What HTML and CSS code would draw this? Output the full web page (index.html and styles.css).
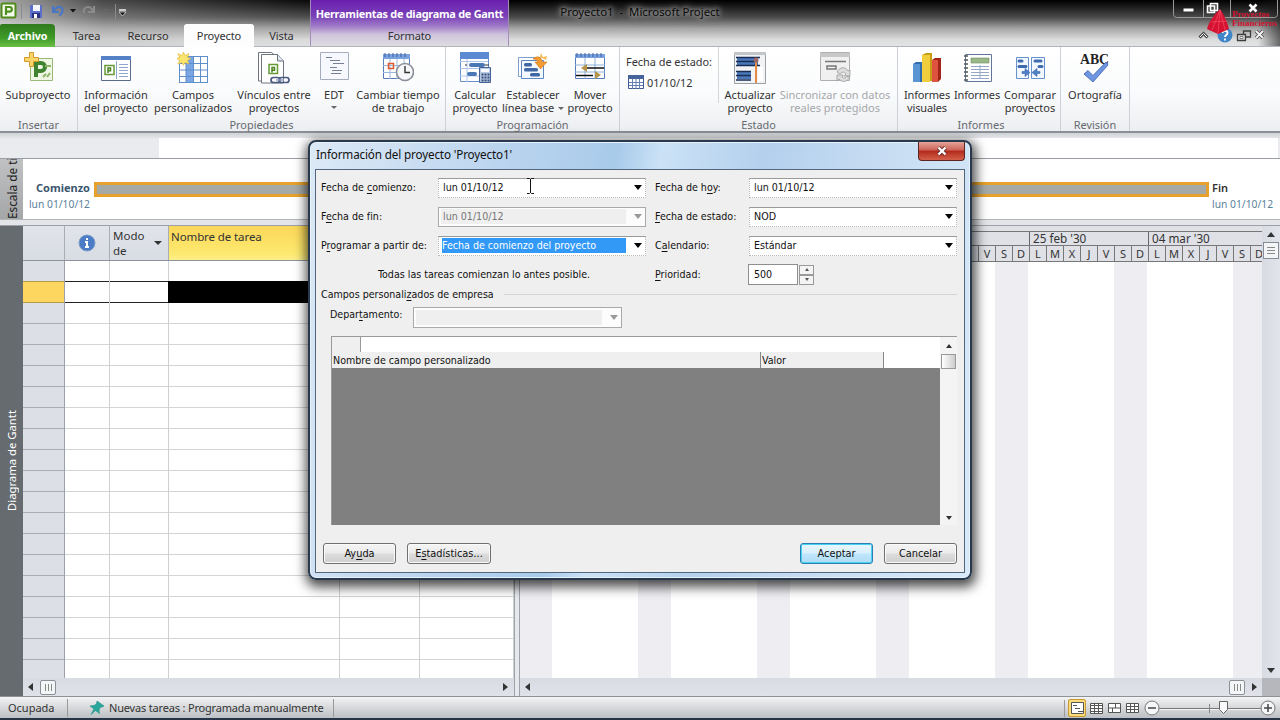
FILE: index.html
```html
<!DOCTYPE html>
<html lang="es">
<head>
<meta charset="utf-8">
<title>Proyecto1 - Microsoft Project</title>
<link rel="stylesheet" href="styles.css">
</head>
<body>
<div class="app">
  <header class="chrome">
    <div class="quick">
      <svg width="130" height="24" viewBox="0 0 130 24">
        <rect x="1.5" y="3.500" width="14" height="14" rx="1.500" fill="#f4f9ea" stroke="#4f8a1c" stroke-width="2"/>
        <path d="M6 15V7h3.500a2.300 2.300 0 0 1 0 4.700H6" fill="none" stroke="#4d9020" stroke-width="2.200"/>
        <path d="M21.500 4v15M115.500 4v15" stroke="#8b8b8b"/>
        <path d="M30 5h12v13H30z" fill="#5b6fc8"/><path d="M33 5h7v6h-7z" fill="#f3f5ff"/><path d="M32 13h8v5h-8z" fill="#28337f"/><path d="M34 14h3v4h-3z" fill="#fff"/>
        <path d="M53 6v6h6M54 11c3-6 9-5 8.500 0 0 2-1.500 3-3 4.500" fill="none" stroke="#4b76c4" stroke-width="2.200"/>
        <path d="M70 9h6l-3 3.500z" fill="#111"/>
        <path d="M94 6v6h-6M93 11c-3-6-10-5-9 2" fill="none" stroke="#8a8a8a" stroke-width="2"/>
        <path d="M103 9h6l-3 3z" fill="#666"/>
        <path d="M119 10h7" stroke="#eee" stroke-width="1.500"/><path d="M119 12h7l-3.500 4z" fill="#111" stroke="#eee" stroke-width=".7"/>
      </svg>
    </div>
    <div class="context"><b>Herramientas de diagrama de Gantt</b><span>Formato</span></div>
    <div class="apptitle">Proyecto1 &nbsp;-&nbsp; Microsoft Project</div>
    <nav class="tabs">
      <span class="tab file">Archivo</span><span class="tab tarea">Tarea</span><span class="tab recurso">Recurso</span><span class="tab on">Proyecto</span><span class="tab vista">Vista</span>
    </nav>
    <div class="winctl">
      <svg width="110" height="47" viewBox="0 0 110 47">
        <path d="M3.500 0v14.500a3 3 0 0 0 3 3h98a3 3 0 0 0 3-3V0M33.500 0v17M60.500 0v17" fill="none" stroke="#999"/>
        <path d="M13.500 8.500h10v3h-10z" fill="#fff"/>
        <path d="M40.500 3.500h7v7h-7z M37.500 6h7v6.500h-7z" fill="#444" stroke="#fff" stroke-width="1.600"/>
        <path d="M79.500 4.500l7 7m0-7l-7 7" stroke="#fff" stroke-width="2.600"/>
        <path d="M29.500 37.500l4-4 4 4" fill="none" stroke="#444" stroke-width="3"/><path d="M30 37l3.500-3.500 3.500 3.500" fill="none" stroke="#fff" stroke-width="1"/>
        <circle cx="55" cy="35" r="7.500" fill="#4286ca"/><path d="M52.500 33c0-3 5-3 5 0 0 2-2.500 2-2.500 4m0 1.500v2" fill="none" stroke="#fff" stroke-width="1.800"/>
        <path d="M73.500 34v-3h7v6h-5" fill="none" stroke="#3c3c3c" stroke-width="1.300"/><path d="M67.500 34.500h8v6h-8z" fill="#ddd" stroke="#3c3c3c" stroke-width="1.300"/><path d="M70 36.500h3v2h-3z" fill="#fff" stroke="#444" stroke-width=".6"/>
        <path d="M86 31l7 7m0-7l-7 7" stroke="#444" stroke-width="3.500"/><path d="M86 31l7 7m0-7l-7 7" stroke="#f4f4f4" stroke-width="2"/>
        <path d="M50 9c3 4 7 12 9 20l-11 5-11-5c2-8 8-15 13-20z" fill="#d61232"/><path d="M50 10l-8 20m8-20l-2 23m2-23l5 20M41 22l16-1" stroke="#f04f68" stroke-width=".7" fill="none"/>
      </svg>
      <div class="mark"><span>Proyectos</span><span>Financieros</span></div>
    </div>
  </header>

  <section class="ribbon">
    <div class="grp g1"><div class="btns">
      <div class="b w76"><svg viewBox="0 0 32 32"><path d="M8.500 6.500h22v22h-22z" fill="#eff6e3" stroke="#9ab878"/><path d="M14 25V11h5a4 4 0 0 1 0 8h-5" fill="none" stroke="#3f8330" stroke-width="4"/><path d="M23 14h6M21 25l3-3m1 3l3-4" stroke="#8cb568" stroke-width="2"/><path d="M7.500.5h4v5h5v4h-5v5h-4v-5h-5v-4h5z" fill="#fbd568" stroke="#d29a2c"/></svg><span>Subproyecto</span></div>
    </div><footer>Insertar</footer></div>
    <div class="grp g2"><div class="btns">
      <div class="b w76"><svg viewBox="0 0 32 32"><path d="M1.500 4.500h29v24h-29z" fill="#fff" stroke="#5b6b8c"/><path d="M1 4h30v4H1z" fill="#5582c6"/><path d="M5 13.500h9v9H5z" fill="#fff" stroke="#659b37" stroke-width="1.500"/><path d="M8 21v-5h2.500v2.800H8" fill="none" stroke="#48821d" stroke-width="1.500"/><path d="M16.500 9v18M19 12.500h9m-9 3h9m-9 3h9m-9 3h9m-9 3h9" stroke="#8fa6cf"/></svg><span>Información<br>del proyecto</span></div>
      <div class="b w78"><svg viewBox="0 0 32 32"><path d="M2 4.500h28v26H2z" fill="#fff"/><path d="M9 4h7v27H9z" fill="#7ba6e6"/><path d="M2.500 4v27M9 4v27M16.500 4v27M23.500 4v27M30.500 4v27M2 4.500h29M2 11.500h29M2 18h29M2 24.500h29M2 30.500h29" fill="none" stroke="#5e8fc9"/><path d="M6.500 0l1.500 3.500 4-2-1.500 4 3.500 1-3.500 2 1.500 3.500-4-1.500-1.500 3-1.500-3-4 1.500 1.500-3.500-3-2 3-1-1.500-4 4 2z" fill="#fbe46c" stroke="#dfb63c" stroke-width=".6"/></svg><span>Campos<br>personalizados</span></div>
      <div class="b w84"><svg viewBox="0 0 32 32"><path d="M.5.5h13l5 4V29H.500z" fill="#fff" stroke="#6d7380"/><path d="M3.500 2.500h16l6 6.500v22h-22z" fill="#fff" stroke="#6d7380"/><path d="M19.500 2.500v6.500h6" fill="#dfe3ea" stroke="#6d7380"/><path d="M11 12.500h8.500v9H11z" fill="#fff" stroke="#659b37" stroke-width="1.500"/><path d="M14 20.500v-5h2.500v2.800H14" fill="none" stroke="#48821d" stroke-width="1.500"/><rect x="13" y="25.500" width="9" height="5" rx="2.500" fill="none" stroke="#4b5a80" stroke-width="1.700"/><rect x="21" y="25.500" width="10" height="5" rx="2.500" fill="none" stroke="#4b5a80" stroke-width="1.700"/><path d="M18 28h8" stroke="#92a1c1" stroke-width="1.400"/></svg><span>Vínculos entre<br>proyectos</span></div>
      <div class="b w36"><svg viewBox="0 0 32 32"><path d="M2.500.5h28v27h-28z" fill="#f6f8fd" stroke="#a6adbe"/><path d="M8 5.500h6m-2 3h10m-7 3h11m-14 4h7m-5 3h10m-11 3h10" stroke="#767f96" stroke-width="1.200"/></svg><span>EDT</span><i class="drop"></i></div>
      <div class="b w92"><svg viewBox="0 0 32 32"><path d="M1.500 2.500h26v24h-26z" fill="#fff" stroke="#577cbb"/><path d="M1 2h27v5H1z" fill="#7aa2dc"/><path d="M3 1v4m4-4v4m4-4v4m4-4v4m4-4v4m4-4v4" stroke="#3d5e9e"/><path d="M1 13.500h27M1 20.500h27M8 7v20M15 7v20M22 7v20" stroke="#9db7dc"/><path d="M6.500 11.500h5v5h-5z" fill="none" stroke="#e0592e" stroke-width="1.500"/><circle cx="23" cy="20" r="8.500" fill="#f6f7f9" stroke="#8a8f99" stroke-width="1.600"/><path d="M23 14v6.500h5" fill="none" stroke="#333" stroke-width="1.400"/></svg><span>Cambiar tiempo<br>de trabajo</span></div>
    </div><footer>Propiedades</footer></div>
    <div class="grp g3"><div class="btns">
      <div class="b w58"><svg viewBox="0 0 32 32"><path d="M1.500.5h28v29h-28z" fill="#fff" stroke="#6a8fca"/><path d="M1 0h29v7H1z" fill="#5b8ad2"/><path d="M1 9.500h28M8 7v23M1 16.500h28M1 24h28" stroke="#afc6e8"/><rect x="10" y="11" width="16" height="4" rx="2" fill="#4c77b5"/><path d="M8 13h-2m20 0h4" stroke="#333"/><rect x="8" y="20" width="10" height="4" rx="2" fill="#4c77b5"/><path d="M20.500 15.500h11v15h-11z" fill="#b9c9e2" stroke="#486398"/><path d="M22 18.500h8" stroke="#f7faff" stroke-width="3"/><path d="M22.500 22.500h8m-8 3h8m-8 3h8" stroke="#34507f" stroke-width="2" stroke-dasharray="2 1"/></svg><span>Calcular<br>proyecto</span></div>
      <div class="b w58"><svg viewBox="0 0 32 32"><path d="M1.500 5.500h22v19h-22z" fill="#fff" stroke="#7f9fce"/><path d="M4.500 8.500h22v18h-22z" fill="#f4f8ff" stroke="#5d86c2"/><rect x="7" y="11" width="8" height="3.500" rx="1.500" fill="#4068a5"/><rect x="7" y="16" width="14" height="3.500" rx="1.500" fill="#4068a5"/><rect x="13" y="21" width="10" height="3.500" rx="1.500" fill="#4068a5"/><path d="M16 7c4-4 9-2 9 3h5l-6.500 7-5.500-7h3c-1-2-3-3-5-3z" fill="#f29c32" stroke="#d57619" stroke-width=".6"/><path d="M23 5l1-4 2 4 4-1-1 4" fill="#f8bd5c"/></svg><span>Establecer<br>línea base <i class="drop in"></i></span></div>
      <div class="b w56"><svg viewBox="0 0 32 32"><path d="M1.500 2.500h29v24h-29z" fill="#fff" stroke="#577cbb"/><path d="M1 2h30v4H1z" fill="#7aa2dc"/><path d="M3 1v4m4-4v4m4-4v4m4-4v4m4-4v4m4-4v4m4-4v4" stroke="#3d5e9e"/><path d="M11 6v21M21 6v21M1 13h30M1 20h30" stroke="#8fafd9"/><path d="M13 16h17M2 23.500h17" stroke="#111" stroke-width="1.600"/><path d="M13 12v8l-6-4zM21 19v8l6-4z" fill="#b49548"/></svg><span>Mover<br>proyecto</span></div>
    </div><footer>Programación</footer></div>
    <div class="grp g4"><div class="btns">
      <div class="state"><span>Fecha de estado:</span><div class="date"><svg width="16" height="16" viewBox="0 0 16 16"><path d="M.5 2.500h15v12H.500z" fill="#fff" stroke="#405a8f"/><path d="M0 1h16v4H0z" fill="#47639c"/><path d="M1 8.500h14M1 11.500h14M4.500 5v10M8 5v10M11.500 5v10" stroke="#6680b0"/></svg>01/10/12</div></div>
      <div class="b w62"><svg viewBox="0 0 32 32"><path d="M.5.5h31v31H.500z" fill="#f1f3f5" stroke="#9aa0a8"/><path d="M0 0h32v3H0z" fill="#c2c6cb"/><path d="M3 6h21v7H3zM3 20h14v7H3z" fill="#4a78ba"/><path d="M2 5.500h24M2 9.500h22M2 13.500h24M2 19.500h15M2 23.500h15M2 28h15" stroke="#182c54" stroke-width="1.700"/><path d="M24 15h5v14h-5z" fill="#fff"/><path d="M22 6v25" stroke="#e48b45" stroke-width="2"/><circle cx="22" cy="8" r="2.500" fill="#9b6a66"/></svg><span>Actualizar<br>proyecto</span></div>
      <div class="b w108 off"><svg viewBox="0 0 32 32"><path d="M1.500.5h29v28h-29z" fill="#f0f0f0" stroke="#b0b0b0"/><path d="M1 1h30v4H1z" fill="#c8c8c8"/><path d="M6 9.500h21M8 14h9v3H8z" fill="none" stroke="#777" stroke-width="1.500"/><path d="M18 20c3-6 9-5 11-1l2-1v6h-6l2-2c-2-3-4-2-6 0zM31 25c-3 6-9 5-11 2l-2 2v-6h6l-1 2c2 2 4 1 5-1z" fill="#ddd" stroke="#999" stroke-width=".8"/></svg><span>Sincronizar con datos<br>reales protegidos</span></div>
    </div><footer>Estado</footer></div>
    <div class="grp g5"><div class="btns">
      <div class="b w50"><svg viewBox="0 0 32 32"><path d="M2 12l3-2h6v20H2z" fill="#2f6cb0"/><path d="M2 12h7v18H2z" fill="#5a95d3"/><path d="M11 3l4-2h6v28H11z" fill="#c99c15"/><path d="M11 3h8v27h-8z" fill="#f0cd3c"/><path d="M21 8l3-2h6v21l-3 3h-6z" fill="#a12417"/><path d="M21 8h6v22h-6z" fill="#de5240"/></svg><span>Informes<br>visuales</span></div>
      <div class="b w50"><svg viewBox="0 0 32 32"><path d="M4.500 2.500h26v27h-26z" fill="#fff" stroke="#60769b"/><path d="M10 6h18v5H10z" fill="#9ab78a" stroke="#6b8f5c" stroke-width=".6"/><path d="M10 14.500h18m-18 3h18m-18 3h18m-18 3h18m-18 3h18M19 13v14" stroke="#93a7c6"/><path d="M3 4h4M3 8h4m-4 4h4m-4 4h4m-4 4h4m-4 4h4m-4 4h4" stroke="#555" stroke-width="1.300"/></svg><span>Informes</span></div>
      <div class="b w56"><svg viewBox="0 0 32 32"><path d="M2.500 5.500h12v21h-12zM17.500 5.500h13v21h-13z" fill="#f3f8ff" stroke="#6791cb"/><path d="M5 9h3M5 14.500h7M21 9h6M25 14.500h3" stroke="#3e6cae" stroke-width="3" stroke-linecap="round"/><path d="M8 19.500h3v-3l5 4-5 4v-3H8zM26 19.500h-3v-3l-5 4 5 4v-3h3z" fill="#4f82c9" stroke="#2d5798" stroke-width=".5"/></svg><span>Comparar<br>proyectos</span></div>
    </div><footer>Informes</footer></div>
    <div class="grp g6"><div class="btns">
      <div class="b w68"><svg viewBox="0 0 32 32"><text x="1" y="12" class="abc" textLength="29" lengthAdjust="spacingAndGlyphs">ABC</text><path d="M5 22l4-3.500 5 5L27 10l2 3-15 17z" fill="#6f96e0" stroke="#3b5fae" stroke-width=".8"/></svg><span>Ortografía</span></div>
    </div><footer>Revisión</footer></div>
  </section>

  <div class="entry"><div></div></div>

  <section class="timeline">
    <div class="vbar light"><span>Escala de ti</span></div>
    <div class="tl">
      <div class="cap start"><b>Comienzo</b><span>lun 01/10/12</span></div>
      <div class="bar"></div>
      <div class="cap end"><b>Fin</b><span>lun 01/10/12</span></div>
    </div>
  </section>
  <div class="split"></div>

  <main class="main">
    <div class="vbar dark"><span>Diagrama de Gantt</span></div>
    <div class="table">
      <div class="thead"><div></div><div class="info"><svg width="18" height="18" viewBox="0 0 18 18"><circle cx="9" cy="9" r="8" fill="#4b7cc5" stroke="#7d9dcc"/><path d="M9 4v2M7 8h2v5M7 13h4" stroke="#fff" stroke-width="2" fill="none"/></svg></div><div class="modo"><span>Modo<br>de</span><i class="tri"></i></div><div class="name">Nombre de tarea</div><div></div><div></div></div>
      <div class="tbody">
        <div class="col rh"><div class="selrow"></div></div>
        <div class="col"><div class="active"></div></div><div class="col"><div class="active"></div></div><div class="col"><div class="cell"></div></div><div class="col"></div><div class="col"></div>
      </div>
      <div class="hs"><i class="l"></i><b></b><u></u><i class="r"></i></div>
    </div>
    <div class="vsplit"></div>
    <div class="gantt">
      <div class="weeks"><span class="w0"></span><span class="wk">25 feb '30</span><span class="wk">04 mar '30</span></div>
      <div class="days"><span class="fill"></span><span>V</span><span>S</span><span>D</span><span>L</span><span>M</span><span>X</span><span>J</span><span>V</span><span>S</span><span>D</span><span>L</span><span>M</span><span>X</span><span>J</span><span>V</span><span>S</span><span>D</span></div>
      <div class="chart"></div>
      <div class="hs"><i class="l"></i><u></u><b></b><i class="r"></i></div>
    </div>
    <div class="vs"><i class="up"></i><b></b><u></u><i class="dn"></i><em></em></div>
  </main>

  <footer class="status">
    <span class="s1">Ocupada</span>
    <span class="s2"><svg width="16" height="16" viewBox="0 0 16 16"><path d="M8 1l7 5-2 1-2 .5-1 3 .5 3-4-3-4.500 4 3-5.500L1 6l4-.5L7.500 4z" fill="#2aa79b" stroke="#1d8f88" stroke-width=".6"/></svg>Nuevas tareas : Programada manualmente</span>
    <span class="views">
      <svg width="212" height="22" viewBox="0 0 212 22">
        <path d="M.5 3v17" stroke="#999"/>
        <rect x="4.500" y="2.500" width="17" height="17" rx="1.500" fill="#fbdc78" stroke="#c89936"/>
        <g fill="#fff" stroke="#555"><path d="M7.500 5.500h12v11h-12zM26.500 6.500h12v10h-12zM44.500 6.500h12v9h-12zM62.500 6.500h12v9h-12z"/></g>
        <path d="M9 8.500h4m-2 3h5m-2 3h5M27 8.500h11m-11 3h11m-11 3h11M30.500 7v9m4-9v9M45 11h11M51.500 7v4m-3 0v4M63 9.500h11m-11 3h11M66.500 7v8m4-8v8" stroke="#555" fill="none"/>
        <path d="M92 11.500h108" stroke="#777"/><path d="M92 12.500h108" stroke="#f4f4f4"/><path d="M145.500 7v9" stroke="#888"/>
        <circle cx="88" cy="11" r="7" fill="#f5f6f7" stroke="#777"/><path d="M84 11h8" stroke="#444" stroke-width="1.500"/>
        <path d="M155.500 4.500h8v8l-4 4-4-4z" fill="#fafafa" stroke="#666"/>
        <circle cx="204" cy="11" r="7" fill="#f5f6f7" stroke="#777"/><path d="M200 11h8m-4-4v8" stroke="#444" stroke-width="1.500"/>
      </svg>
    </span>
  </footer>
  <div class="bottom"></div>

  <div class="dialog">
    <div class="dtitle"><span>Información del proyecto 'Proyecto1'</span><div class="close"><svg width="14" height="12" viewBox="0 0 14 12"><path d="M3.500 2.500l7 7m0-7l-7 7" stroke="#6d2b27" stroke-width="4.200"/><path d="M3.500 2.500l7 7m0-7l-7 7" stroke="#fff" stroke-width="2.400"/></svg></div></div>
    <div class="dbody">
      <div class="form">
        <label>Fecha de <u>c</u>omienzo:</label><div class="combo"><span>lun 01/10/12</span><i></i></div>
        <label class="r">Fecha de h<u>o</u>y:</label><div class="combo"><span>lun 01/10/12</span><i></i></div>
        <label>F<u>e</u>cha de fin:</label><div class="combo dis"><span>lun 01/10/12</span><i></i></div>
        <label class="r"><u>F</u>echa de estado:</label><div class="combo"><span>NOD</span><i></i></div>
        <label>P<u>r</u>ogramar a partir de:</label><div class="combo"><span class="hl">Fecha de comienzo del proyecto</span><i></i></div>
        <label class="r">C<u>a</u>lendario:</label><div class="combo"><span>Estándar</span><i></i></div>
        <p>Todas las tareas comienzan lo antes posible.</p>
        <label class="r"><u>P</u>rioridad:</label><div class="prio"><div>500</div><div class="spin"><b><i class="sup"></i></b><b><i class="sdn"></i></b></div></div>
      </div>
      <div class="legend"><span>Campos personali<u>z</u>ados de empresa</span><hr></div>
      <div class="dept"><label>Depar<u>t</u>amento:</label><div class="combo dis"><span></span><i></i></div></div>
      <div class="grid">
        <div class="gl">
          <div class="strip"><i></i></div>
          <div class="gh"><span>Nombre de campo personalizado</span><span>Valor</span></div>
          <div class="void"></div>
        </div>
        <div class="gs"><i class="up"></i><b></b><u></u><i class="dn"></i></div>
      </div>
      <div class="acts"><button class="btn">Ay<u>u</u>da</button><button class="btn wide">E<u>s</u>tadísticas...</button><button class="btn def">Aceptar</button><button class="btn">Cancelar</button></div>
    </div>
  </div>
  <svg class="caret" width="9" height="16" viewBox="0 0 9 16"><path d="M1 .5h2.500l1 1 1-1H8M4.500 1v14M1 15.500h2.500l1-1 1 1H8" fill="none" stroke="#111"/></svg>
</div>
</body>
</html>
```
FILE: styles.css
```css
*{box-sizing:border-box}
body{margin:0;font:12px/13px "Noto Sans","Open Sans",sans-serif;color:#333;background:#fff}
i{font-style:normal}
.app{position:relative;width:1280px;height:720px;overflow:hidden;display:flex;flex-direction:column}

/* window chrome */
.chrome{position:relative;height:47px;flex:none;background:linear-gradient(#000 0,#1c1c1c 15%,#4c4c4c 38%,#a5a5a5 62%,#dcdcdc 86%,#e3e4e6);border-bottom:1px solid #b0b3b8;display:flex;flex-direction:column}
.chrome::before{content:"";position:absolute;left:0;top:0;width:340px;height:46px;background:linear-gradient(90deg,rgba(225,225,225,.75),rgba(180,180,180,.4) 30%,transparent)}
.quick{position:relative;height:24px}
.quick svg{display:block}
.tabs{position:relative;display:flex;height:23px;color:#333;font-size:11px;letter-spacing:-.1px}
.tab{text-align:center;line-height:24px}
.file{width:55px;background:linear-gradient(#2f7a1d,#3f9a28 60%,#6cc045);color:#fff;font-weight:bold;font-size:10.700px;border-radius:2px 4px 0 0;letter-spacing:-.15px}
.tarea{width:63px}
.recurso{width:60px;margin-right:6px}
.on{width:70px;background:#fdfdfe;border-radius:3px 3px 0 0}
.vista{width:55px}
.context{position:absolute;left:310px;top:0;width:199px;height:46px;background:linear-gradient(#6a1fae 0,#7a41b8 35%,#9d78c6 56%,#cfc3dc 75%,#dedde1);border:solid #a48dbd;border-width:0 1px;text-align:center;display:flex;flex-direction:column;color:#333;font-size:11px}
.context b{color:#fff;height:24px;line-height:28px;font-size:10.900px;white-space:nowrap;letter-spacing:-.25px}
.context span{line-height:24px;letter-spacing:-.1px}
.apptitle{position:absolute;left:545px;top:3px;width:190px;line-height:18px;text-align:center;color:#0a0a0a;font-size:11.400px;white-space:nowrap;text-shadow:0 0 4px #aaa,0 0 6px #aaa,0 0 10px #999,0 0 14px #888}
.winctl{position:absolute;right:0;top:0;width:110px;height:46px;background:linear-gradient(90deg,transparent 80%,rgba(20,20,20,.6))}
.mark{position:absolute;left:62px;top:10px;width:50px;display:flex;flex-direction:column;font:bold 9px/9px "Liberation Serif",serif;color:#d01230}

/* ribbon */
.ribbon{height:86px;flex:none;display:flex;background:linear-gradient(#fff,#fafbfc 55%,#eceef1);border-bottom:2px solid #8b8f96;color:#333}
.grp{display:flex;flex-direction:column;border-right:1px solid #cdd0d6}
.grp footer{text-align:center;color:#666a70;font-size:10.900px;line-height:13px}
.btns{height:71px;flex:none;display:flex}
.g1{width:78px}.g2{width:368px}.g3{width:174px}.g4{width:278px}.g5{width:163px;padding-left:4px}.g6{width:69px}
.b{display:flex;flex-direction:column;align-items:center;padding-top:5px;text-align:center;white-space:nowrap;font-size:11px}
.b svg{width:32px;height:32px;flex:none;margin-bottom:4px}
.w36{width:36px}.w50{width:50px}.w56{width:56px}.w58{width:58px}.w62{width:62px}.w68{width:68px}.w76{width:76px}.w78{width:78px}.w84{width:84px}.w92{width:92px}.w108{width:108px}
.w50{letter-spacing:-.15px}
.b span{margin:0 -10px}
.off{color:#a6a8ab}
.drop{border:3px solid transparent;border-top-color:#666;border-bottom:0;margin-top:5px}
.drop.in{display:inline-block;margin:0 0 2px 1px}
.abc{font:bold 14px "Liberation Serif",serif;fill:#222}
.state{width:99px;border-right:1px solid #d4d7dc;height:56px;padding:8px 0 0 6px;font-size:10.900px;white-space:nowrap}
.date{display:flex;align-items:center;gap:3px;margin:6px 0 0 2px;height:16px}

/* entry bar and timeline */
.entry{height:26px;flex:none;background:linear-gradient(#cfd2d6,#e9ebee 25%);border-bottom:1px solid #9a9da3;padding:5px 2px 0 159px}
.entry div{height:20px;background:#fff}
.timeline{height:61px;flex:none;display:flex;border-bottom:1px solid #b2b4b8}
.vbar{width:23px;flex:none;display:flex;justify-content:center;overflow:hidden;font-size:11.300px}
.vbar span{writing-mode:vertical-rl;transform:rotate(180deg);white-space:nowrap;line-height:22px}
.light{background:linear-gradient(#bfc1c3,#a4a6a8);color:#222;align-items:flex-end;font-size:11.800px}
.light span{height:60px;overflow:hidden}
.tl{flex:1;display:flex;align-items:flex-start;background:#fff}
.bar{flex:1;height:15px;margin-top:23px;border:3px solid #e6a22c;background:#a5aaa6}
.cap{display:flex;flex-direction:column;padding-top:21px;font-size:10.300px;color:#5b7f9b;gap:2px;white-space:nowrap}
.cap b{font-size:11px;line-height:16px;color:#3b566e}
.start{width:71px;align-items:flex-end;padding-right:4px}
.end{width:71px;padding-left:3px}
.cap.end b{color:#333;font-weight:600}
.split{height:6px;flex:none;background:#e4e5e8;border-bottom:1px solid #9da0a6}

/* task table */
.main{height:470px;flex:none;display:flex}
.dark{background:#666b70;color:#fff;align-items:center}
.table{width:491px;display:flex;flex-direction:column}
.thead{height:35px;display:grid;grid-template-columns:42px 45px 59px 171px 80px 94px;background:linear-gradient(#e1e4ea,#d8dce3);border-bottom:1px solid #8f949c;font-size:11.500px}
.thead>div{border-right:1px solid #a9adb4}
.info{display:grid;place-items:center}
.modo{display:flex;justify-content:space-between;align-items:center;padding:0 6px 0 3px;line-height:15px}
.tri{border:4px solid transparent;border-top-color:#333;border-bottom:0}
.name{background:linear-gradient(#fbd758,#fde96f 80%,#fdf08a);padding:4px 0 0 2px;letter-spacing:-.1px}
.tbody{height:417px;display:grid;grid-template-columns:42px 45px 59px 171px 80px 94px;background:#fff}
.col{border-right:1px solid #cfd0d3;background:repeating-linear-gradient(transparent 0 20px,#d3d4d6 20px 21px);padding-top:20px}
.rh{background:repeating-linear-gradient(transparent 0 20px,#a9adb4 20px 21px),#dce0e6;border-color:#9ca0a8}
.selrow{height:22px;background:#fcd65e;border:solid #b59b4c;border-width:1px 0}
.active{height:22px;border:solid #222;border-width:1px 0}
.cell{height:22px;background:#000;margin-left:-1px}
.hs{height:18px;display:flex;align-items:center;background:linear-gradient(#d8dbe2,#e0e2e8)}
.hs i{border:4px solid transparent;margin:0 4px}
.hs .l{border-right:5px solid #333;border-left:0;margin-left:5px}
.hs .r{border-left:5px solid #333;border-right:0;margin-right:6px}
.hs b{width:16px;height:15px;border:1px solid #8b8f97;border-radius:2px;background:repeating-linear-gradient(90deg,transparent 0 2px,#888 2px 3px) 2px 3px/10px 7px no-repeat,#f4f5f7;margin-left:3px}
.hs u{flex:1}
.vsplit{width:6px;background:#e6e8ec;border:solid #9ea2aa;border-width:0 1px}

/* gantt */
.gantt{width:742px;display:flex;flex-direction:column;padding-top:5px;background:#dfe1e6;overflow:hidden}
.weeks{height:15px;display:flex;border-top:1px solid #777;border-bottom:1px solid #777;line-height:13px;font-size:11.700px}
.w0{width:509px}
.wk{width:119px;flex:none;border-left:1px solid #666;padding-left:3px}
.wk:last-child{width:114px}
.days{height:16px;display:flex;border-bottom:1px solid #777;font-size:11px;line-height:15px}
.days span{width:17px;flex:none;text-align:center;border-left:1px solid #777}
.days .fill{width:458px;border:0}
.chart{height:416px;flex:none;background:repeating-linear-gradient(90deg,#ededf2 0 33px,#fff 33px 119px);background-position:-1px 0}
.gantt .hs{height:18px}
.gantt .hs b{margin-right:3px}
.gantt .hs .r{margin-right:5px}
.vs{width:18px;display:flex;flex-direction:column;align-items:center;background:linear-gradient(90deg,#d8dbe2,#e2e4ea)}
.up{border:4px solid transparent;border-bottom:5px solid #333;border-top:0;margin:6px 0 5px}
.dn{border:4px solid transparent;border-top:5px solid #333;border-bottom:0;margin:5px 0 5px}
.vs b{width:16px;height:17px;border:1px solid #888c94;background:repeating-linear-gradient(transparent 0 2px,#888 2px 3px) 3px 2px/8px 10px no-repeat,#f4f5f7}
.vs u{flex:1}
.vs em{width:18px;height:18px;background:#b5b7bd}

/* status bar */
.status{height:22px;flex:none;display:flex;align-items:center;border-top:1px solid #8e9297;background:linear-gradient(#f3f4f5,#d9dbdd 45%,#bdc0c4);font-size:11px;white-space:nowrap}
.s1{width:68px;padding-left:8px;border-right:1px solid #999;line-height:18px}
.s2{width:266px;padding-left:21px;display:flex;align-items:center;gap:4px;border-right:1px solid #999;line-height:18px;letter-spacing:-.18px}
.s2 svg{flex:none}
.views{margin:0 4px 0 auto;height:22px}
.views svg{display:block}
.bottom{height:2px;background:#273447}

/* dialog */
.dialog{position:absolute;left:308px;top:140px;width:664px;height:440px;border:2px solid #29394d;border-radius:8px;background:linear-gradient(100deg,#dce9f6,#b9d3ee 28%,#a8cbea 42%,#cbe2f6 48%,#b4d0ed 62%,#c9def3 80%,#d8eafa);box-shadow:inset 0 0 0 1px #e7f1fb,1px 4px 12px 3px rgba(0,0,0,.7);padding:0 5px;font:10.600px/13px "DejaVu Sans Condensed","DejaVu Sans",sans-serif;color:#111}
.dtitle{height:27px;display:flex;justify-content:space-between;padding-left:1px;font:11.700px/25px "Noto Sans",sans-serif;letter-spacing:-.15px}
.close{width:47px;height:19px;border:1px solid #5b2622;border-top:0;border-radius:0 0 4px 4px;background:linear-gradient(#e4a399,#cd6357 45%,#b2291b 50%,#d4604a);display:grid;place-items:center}
.dbody{height:404px;border:1px solid #52667d;background:#efefef;padding:3px 7px 0 5px;display:flex;flex-direction:column}
.dbody>*{flex:none}
.form{display:grid;grid-template-columns:117px 208px 9px 94px 208px;grid-template-rows:repeat(4,29px);align-items:center;white-space:nowrap}
.form .r{grid-column:4}
.form u,.legend u,.dept u,.btn u{text-underline-offset:2px}
.combo{height:20px;background:#fff;border:1px dotted #b9b9b9;border-top:1px solid #9a9a9a;display:flex;align-items:center;padding:0 3px 0 2px}
.combo span{flex:1;margin-right:8px;padding:0 2px;line-height:15px;height:15px}
.combo i{border:4px solid transparent;border-top:5px solid #000;border-bottom:0}
.combo .hl{background:#3399f7;color:#fff;padding:0;margin-left:1px}
.combo.dis{border:1px solid #a9a9a9;background:#fcfcfc;color:#777}
.combo.dis span{background:#efefef}
.combo.dis i{border-top-color:#999}
.form p{grid-column:1/3;margin:0 0 0 57px}
.prio{display:flex;gap:1px;align-items:center;margin-left:-1px}
.prio>div:first-child{width:50px;height:21px;background:#fff;border:1px solid #8e8e8e;padding-left:5px;line-height:19px}
.spin{display:flex;flex-direction:column}
.spin b{width:15px;height:10px;border:1px solid #999;background:#f4f4f4;display:grid;place-items:center}
.sup,.sdn{border:2px solid transparent}
.sup{border-bottom:3px solid #555;border-top:0}
.sdn{border-top:3px solid #555;border-bottom:0}
.legend{height:11px;display:flex;align-items:center;gap:10px;white-space:nowrap}
.legend hr{flex:1;margin:0;border:0;border-top:1px solid #d4d4d4}
.dept{height:30px;display:flex;align-items:center;padding:4px 0 0 9px;white-space:nowrap}
.dept label{width:83px;margin-bottom:5px}
.dept .combo{width:209px;height:21px}
.grid{height:189px;margin:6px 0 0 10px;border:1px solid #999;border-right:0;border-bottom:0;display:flex}
.gl{width:608px;display:flex;flex-direction:column}
.strip{height:15px;background:#fff}
.strip i{display:block;width:29px;height:15px;background:#efefef;border-right:1px solid #999}
.gh{height:16px;background:#fff;display:flex;line-height:17px}
.gh span{background:#efefef;border-right:1px solid #888;padding-left:1px;width:429px}
.gh span + span{width:123px}
.void{flex:1;background:#808080}
.gs{width:17px;display:flex;flex-direction:column;align-items:center;background:#f4f4f4}
.gs b{width:15px;height:15px;border:1px solid #999;background:linear-gradient(90deg,#fff,#ccc)}
.gs u{flex:1}
.gs .up{border-width:0 3px 4px;margin:7px 0 6px}
.gs .dn{border-width:4px 3px 0;margin:4px 0 5px}
.acts{display:flex;margin:18px 0 0 2px}
.btn{width:73px;height:21px;padding:0;border:1px solid #707070;border-radius:3px;background:linear-gradient(#f4f4f4,#ebebeb 48%,#dcdcdc 52%,#cfcfcf);font:inherit;font-size:10.900px;color:#111;box-shadow:inset 0 0 0 1px #fafafa;margin-right:11px}
.wide{width:84px}
.def{margin-left:auto;border-color:#2c7fae;background:linear-gradient(#e9f6fd,#d9f0fc 48%,#bee6fd 52%,#b2dcf4);box-shadow:inset 0 0 0 1px #45d2f4}
.btn:last-child{margin-right:0}
.caret{position:absolute;left:526px;top:178px}
```
